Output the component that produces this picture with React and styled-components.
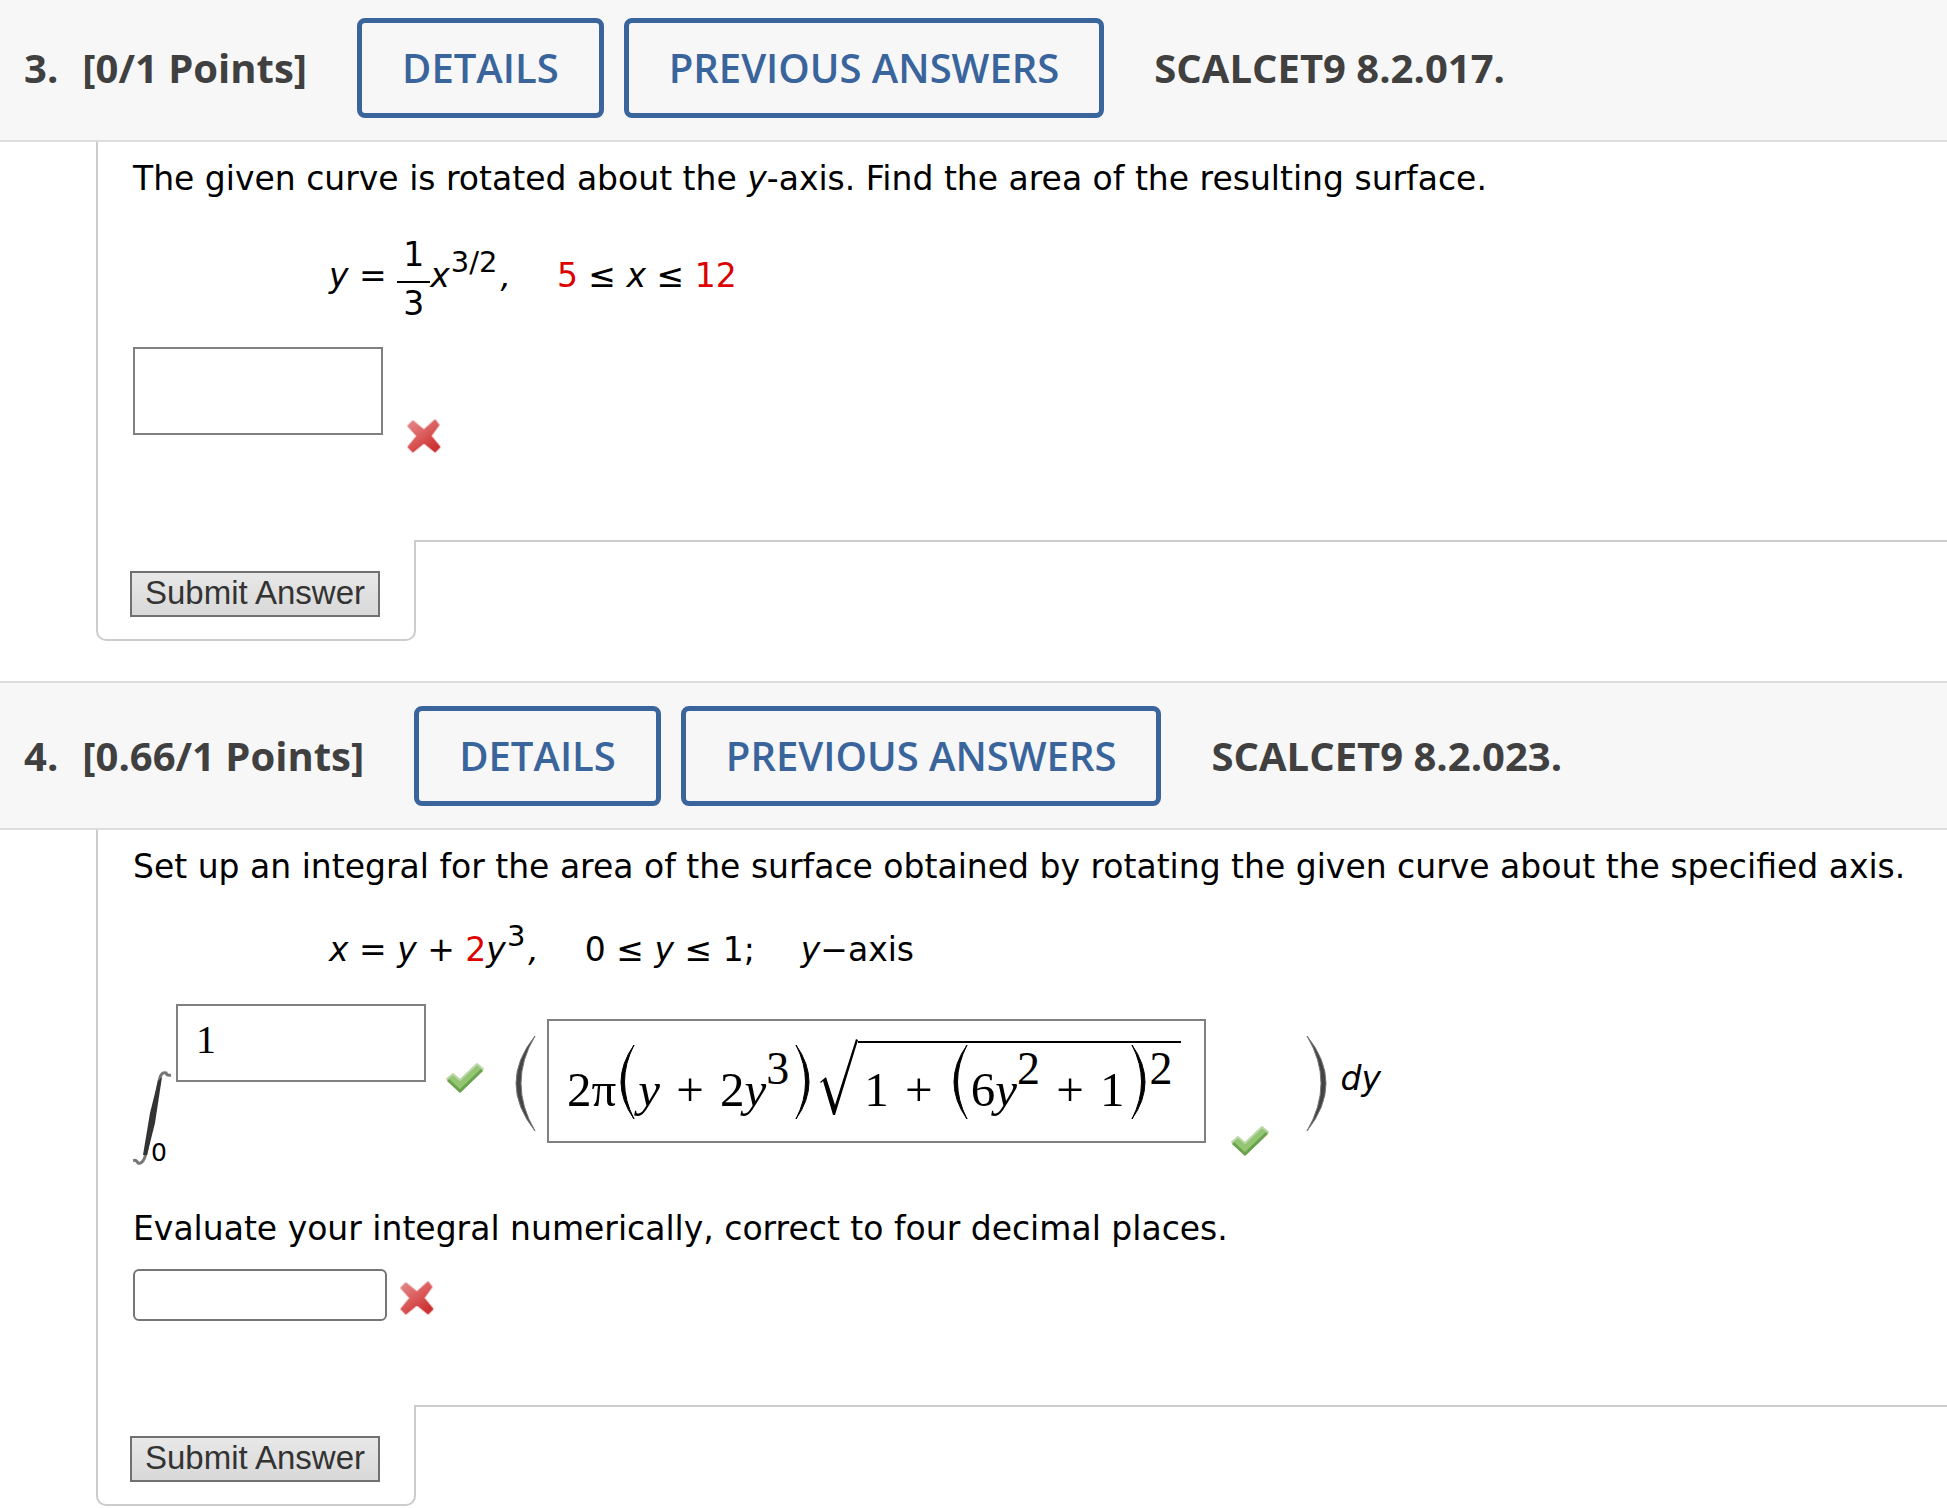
import React, { useState } from "react";
import styled, { createGlobalStyle } from "styled-components";

const GlobalStyle = createGlobalStyle`
  * {
    box-sizing: border-box;
  }
  body {
    margin: 0;
    background: #fff;
    color: #000;
    font: 33px/40px Verdana, "DejaVu Sans", sans-serif;
  }
`;

const Header = styled.header`
  display: flex;
  align-items: center;
  padding: ${(p) => (p.$first ? "18px" : "23px")} 24px 22px;
  border-top: ${(p) => (p.$first ? "none" : "2px solid #ddd")};
  border-bottom: 2px solid #ddd;
  background: #f7f7f7;
  color: #404040;
  font: 700 40px/56px "Open Sans", sans-serif;
  white-space: nowrap;
`;

const Points = styled.span`
  margin: 0 50px 0 24px;
`;

const Actions = styled.div`
  display: flex;
  gap: 20px;
  margin-right: 50px;
`;

const HeaderButton = styled.button`
  height: 100px;
  padding: 0 40px;
  border: 5px solid #3a649c;
  border-radius: 8px;
  background: transparent;
  color: #3a649c;
  font: 600 40px/56px "Open Sans", sans-serif;
`;

const Title = styled.h2`
  margin: 0;
  font: inherit;
`;

const Body = styled.div`
  margin-left: 96px;
  padding: 17px 0 ${(p) => p.$bottom}px 35px;
  border-left: 2px solid #ccc;
`;

const Text = styled.p`
  margin: 0;
`;

const Equation = styled.div`
  padding: ${(p) => p.$top}px 0 ${(p) => p.$bottom}px 196px;
  white-space: pre;
`;

const Fraction = styled.span`
  display: inline-flex;
  flex-direction: column;
  vertical-align: 21px;
  text-align: center;

  span {
    padding: 1px 6px 0;
  }
  span:first-child {
    padding: 0 6px 6px;
    border-bottom: 2px solid #000;
  }
`;

const Sup = styled.sup`
  margin: 0 3px 0 1px;
  font-size: 29px;
  line-height: 0;
  vertical-align: 15px;
`;

const Gap = styled.span`
  display: inline-block;
  width: 46px;
`;

const Red = styled.span`
  color: #d00;
`;

const AnswerRow = styled.div`
  display: flex;
  align-items: flex-end;
  gap: ${(p) => p.$gap}px;
  padding-top: ${(p) => p.$top || 0}px;
`;

const MathInput = styled.input`
  width: 250px;
  height: ${(p) => p.$height}px;
  padding: 0 18px 8px;
  border: 2px solid #808080;
  background: #fff;
  font: 40px "Liberation Serif", serif;
  outline: none;
`;

const NumberInput = styled.input`
  width: 254px;
  height: 52px;
  padding: 0 8px;
  border: 2px solid #767676;
  border-radius: 6px;
  font: 33px "Liberation Sans", sans-serif;
  outline: none;
`;

const Mark = styled.svg`
  display: block;
  flex: none;
  margin-bottom: ${(p) => p.$bottom || 0}px;
`;

const IntegralRow = styled.div`
  display: flex;
  height: 180px;
  margin-bottom: 25px;
`;

const Limits = styled.div`
  display: grid;
  grid-template-columns: 43px auto;
  align-self: flex-start;
`;

const SignCell = styled.div`
  display: flex;
  padding-top: 67px;
`;

const LowerLimit = styled.span`
  align-self: flex-end;
  margin-left: -21px;
  font-size: 25px;
  line-height: 24px;
`;

const Slot = styled.div`
  flex: none;
  padding-top: ${(p) => p.$top}px;
  margin-left: ${(p) => p.$left}px;
`;

const MathField = styled.div`
  display: flex;
  height: 124px;
  padding: 20px 23px 0 18px;
  border: 2px solid #808080;
  font: 49px/98px "Liberation Serif", serif;
  white-space: nowrap;
  outline: none;
`;

const Power = styled.sup`
  font-size: 46px;
  line-height: 0;
  vertical-align: 22px;
`;

const OuterPower = styled(Power)`
  margin-left: 4px;
`;

const Operator = styled.span`
  display: inline-block;
  width: 60px;
  text-align: center;
`;

const Radicand = styled.span`
  display: flex;
  padding: 0 8px 0 6px;
  box-shadow: inset 0 2px #000;
`;

const Stretchy = styled.svg`
  display: block;
  flex: none;
  margin: ${(p) => p.$margin || "0"};
`;

const Footer = styled.footer`
  display: flex;
  align-items: flex-start;
  margin: 0 0 ${(p) => (p.$last ? 0 : 40)}px 96px;
`;

const SubmitTab = styled.div`
  width: 320px;
  height: 101px;
  padding: 31px 0 0 32px;
  border: 2px solid #ccc;
  border-top: none;
  border-radius: 0 0 10px 10px;
`;

const FooterLine = styled.div`
  flex: 1;
  border-top: 2px solid #ccc;
`;

const SubmitButton = styled.button`
  display: block;
  width: 250px;
  height: 46px;
  padding: 0 0 2px;
  border: 2px solid #707070;
  background: linear-gradient(#e8e8e8, #d8d8d8);
  color: #333;
  font: 33px "Liberation Sans", sans-serif;
`;

const Wrong = ({ bottom }) => (
  <Mark $bottom={bottom} width="34" height="36" viewBox="0 0 34 36" role="img" aria-label="Incorrect">
    <defs>
      <linearGradient id="wrong" x1="0" y1="0" x2="0.7" y2="1">
        <stop offset="0" stopColor="#e28888" />
        <stop offset="0.5" stopColor="#dc5e5e" />
        <stop offset="1" stopColor="#cc3232" />
      </linearGradient>
    </defs>
    <path
      d="M6 4 L17 13 L28 3 L31 7 L23 18 L32 29 L28 33 L17 24 L6 33 L2 29 L11 18 L2 8 Z"
      fill="url(#wrong)"
      stroke="#f0c4c4"
      strokeWidth="4"
      strokeLinejoin="round"
    />
    <path
      d="M6 4 L17 13 L28 3 L31 7 L23 18 L32 29 L28 33 L17 24 L6 33 L2 29 L11 18 L2 8 Z"
      fill="url(#wrong)"
      stroke="url(#wrong)"
      strokeWidth="2"
      strokeLinejoin="round"
    />
  </Mark>
);

const Correct = () => (
  <Mark width="40" height="32" viewBox="0 0 40 32" role="img" aria-label="Correct">
    <path
      d="M2 17 L8 12 L15 18 L32 2 L38 7 L15 30 Z"
      fill="#93c572"
      stroke="#bcd8ab"
      strokeWidth="2"
      strokeLinejoin="round"
    />
    <path d="M3 18 L15 29 L37 8" fill="none" stroke="#6ba34c" strokeWidth="3" strokeLinejoin="round" />
  </Mark>
);

const Paren = ({ close }) => (
  <Stretchy width="15" height="74" viewBox="0 0 15 74" $margin={close ? "4px 0 0 6px" : "4px 3px 0 4px"}>
    <path
      d={close ? "M1 0 Q27 37 1 74 Q20 37 1 0 Z" : "M14 0 Q-12 37 14 74 Q-5 37 14 0 Z"}
      stroke="#000"
      strokeWidth="1"
    />
  </Stretchy>
);

const BigParen = ({ close }) => (
  <Stretchy width="22" height="97" viewBox="0 0 22 97">
    <path
      d={close ? "M1 1 Q39 48 1 96 Q29 48 1 1 Z" : "M21 1 Q-17 48 21 96 Q-7 48 21 1 Z"}
      fill="#444"
      stroke="#777"
      strokeWidth="1"
    />
  </Stretchy>
);

const IntegralSign = () => (
  <Stretchy width="39" height="94" viewBox="0 0 39 94">
    <path
      d="M38 4 Q34 5 33 2 Q28 0 26 10 L14 78 Q11 94 5 92 Q3 88 0 90"
      fill="none"
      stroke="#777"
      strokeWidth="3"
    />
    <path d="M29 6 L22 52 L14 84 L10 84 L17 42 L25 10 Z" fill="#333" />
  </Stretchy>
);

const Radical = () => (
  <Stretchy width="39" height="77" viewBox="0 0 39 77" $margin="-2px 0 0 9px">
    <path d="M1 43 L7 38 L16 66 L37 0 L39 1 L16 76 L14 76 L4 42 L2 44 Z" />
  </Stretchy>
);

const Question = ({ number, points, title, first, last, children }) => (
  <section>
    <Header $first={first}>
      <span>{number}.</span>
      <Points>[{points} Points]</Points>
      <Actions>
        <HeaderButton type="button">DETAILS</HeaderButton>
        <HeaderButton type="button">PREVIOUS ANSWERS</HeaderButton>
      </Actions>
      <Title>{title}</Title>
    </Header>
    {children}
    <Footer $last={last}>
      <SubmitTab>
        <SubmitButton type="submit">Submit Answer</SubmitButton>
      </SubmitTab>
      <FooterLine />
    </Footer>
  </section>
);

const App = () => {
  const [area, setArea] = useState("");
  const [upper, setUpper] = useState("1");
  const [value, setValue] = useState("");

  return (
    <main>
      <GlobalStyle />
      <Question first number={3} points="0/1" title="SCALCET9 8.2.017.">
        <Body $bottom={105}>
          <Text>
            The given curve is rotated about the <i>y</i>-axis. Find the area of the resulting surface.
          </Text>
          <Equation $top={36} $bottom={23}>
            <i>y</i>
            {" = "}
            <Fraction>
              <span>1</span>
              <span>3</span>
            </Fraction>
            <i>x</i>
            <Sup>3/2</Sup>
            <i>,</i>
            <Gap />
            <Red>5</Red>
            {" ≤ "}
            <i>x</i>
            {" ≤ "}
            <Red>12</Red>
          </Equation>
          <AnswerRow $gap={24}>
            <MathInput
              $height={88}
              aria-label="Surface area"
              value={area}
              onChange={(e) => setArea(e.target.value)}
            />
            <Wrong bottom={-19} />
          </AnswerRow>
        </Body>
      </Question>

      <Question last number={4} points="0.66/1" title="SCALCET9 8.2.023.">
        <Body $bottom={84}>
          <Text>
            Set up an integral for the area of the surface obtained by rotating the given curve about the
            specified axis.
          </Text>
          <Equation $top={43} $bottom={34}>
            <i>x</i>
            {" = "}
            <i>y</i>
            {" + "}
            <Red>2</Red>
            <i>y</i>
            <Sup>3</Sup>
            <i>,</i>
            <Gap />
            {"0 ≤ "}
            <i>y</i>
            {" ≤ 1;"}
            <Gap />
            <i>y</i>
            −axis
          </Equation>
          <IntegralRow>
            <Limits>
              <SignCell>
                <IntegralSign />
                <LowerLimit>0</LowerLimit>
              </SignCell>
              <MathInput
                $height={78}
                aria-label="Upper limit"
                value={upper}
                onChange={(e) => setUpper(e.target.value)}
              />
            </Limits>
            <Slot $top={58} $left={19}>
              <Correct />
            </Slot>
            <Slot $top={31} $left={29}>
              <BigParen />
            </Slot>
            <Slot $top={15} $left={11}>
              <MathField role="textbox" aria-label="Integrand" tabIndex={0}>
                <span>2π</span>
                <Paren />
                <span>
                  <i>y</i>
                  <Operator>+</Operator>2<i>y</i>
                  <Power>3</Power>
                </span>
                <Paren close />
                <Radical />
                <Radicand>
                  <span>
                    1<Operator>+</Operator>
                  </span>
                  <Paren />
                  <span>
                    6<i>y</i>
                    <Power>2</Power>
                    <Operator>+</Operator>1
                  </span>
                  <Paren close />
                  <span>
                    <OuterPower>2</OuterPower>
                  </span>
                </Radicand>
              </MathField>
            </Slot>
            <Slot $top={121} $left={24}>
              <Correct />
            </Slot>
            <Slot $top={31} $left={36}>
              <BigParen close />
            </Slot>
            <Slot $top={55} $left={13}>
              <i>dy</i>
            </Slot>
          </IntegralRow>
          <Text>Evaluate your integral numerically, correct to four decimal places.</Text>
          <AnswerRow $gap={13} $top={20}>
            <NumberInput
              aria-label="Numerical value"
              value={value}
              onChange={(e) => setValue(e.target.value)}
            />
            <Wrong bottom={5} />
          </AnswerRow>
        </Body>
      </Question>
    </main>
  );
};

export default App;
